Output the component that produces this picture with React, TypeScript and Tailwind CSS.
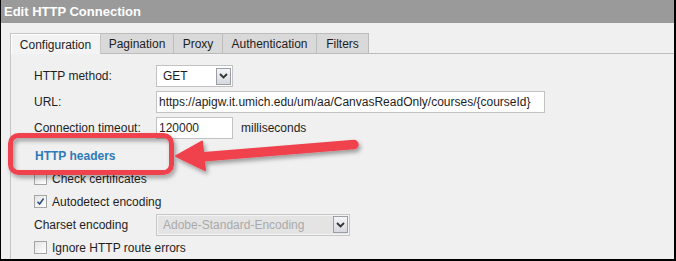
import React from "react";

const font = "font-['Liberation_Sans',Arial,sans-serif]";

function Chevron() {
  return (
    <svg width="9" height="6" viewBox="0 0 9 6">
      <path d="M1 1 L4.5 4.5 L8 1" fill="none" stroke="#333" strokeWidth="1.8" />
    </svg>
  );
}

function DropButton() {
  return (
    <span className="flex h-[17px] w-[15px] items-center justify-center border border-[#9a9ea6] bg-gradient-to-b from-[#f4f5f7] to-[#d6d9df]">
      <Chevron />
    </span>
  );
}

function Checkbox({ checked, label }: { checked?: boolean; label: string }) {
  return (
    <div className="flex h-[23px] items-center gap-[5px]">
      <span className="flex h-[13px] w-[13px] items-center justify-center border border-[#a5a5a5] bg-gradient-to-br from-[#e4e4e4] to-white">
        {checked && (
          <svg width="9" height="9" viewBox="0 0 9 9">
            <path d="M1.5 4.8 L3.6 7 L7.6 1.6" fill="none" stroke="#2b4f85" strokeWidth="1.6" />
          </svg>
        )}
      </span>
      <span>{label}</span>
    </div>
  );
}

const tabs = [
  { label: "Pagination", w: "w-[73px]" },
  { label: "Proxy", w: "w-[49px]" },
  { label: "Authentication", w: "w-[94px]" },
  { label: "Filters", w: "w-[52px]" },
];

export default function App() {
  return (
    <div className={`relative h-[261px] w-[676px] overflow-hidden border-b-2 border-l border-r-2 border-black bg-[#f0f0f0] text-[12px] text-[#1e1e1e] ${font}`}>
      <div className="flex h-[23px] items-center bg-[#9a9a9a] pl-[3px] text-[13px] font-bold text-white">Edit HTTP Connection</div>

      <div className="pl-[9px] pt-[10px]">
        {/* tab strip */}
        <div className="flex h-[21px] items-stretch">
          <div className="relative z-10 flex w-[91px] items-center justify-center border-l border-r border-t border-[#c5c5c5] bg-[#f3f3f3] pt-[1px] shadow-[inset_1px_1px_0_#fff]">
            Configuration
          </div>
          {tabs.map((t) => (
            <div key={t.label} className={`flex ${t.w} items-center justify-center border-b border-r border-t border-[#bcbcbc] bg-[#d9d9d9] pt-[1px]`}>
              {t.label}
            </div>
          ))}
          <div className="flex-1 border-b border-[#bcbcbc]" />
        </div>

        {/* panel */}
        <div className="h-[220px] border-l border-[#c5c5c5] pl-[23px] pt-[11px]">
          <div className="flex h-[22px] items-center">
            <span className="w-[122px]">HTTP method:</span>
            <div className="flex h-[22px] w-[77px] items-center justify-between border border-[#c2c2c2] bg-white pl-[6px] pr-[1px]">
              <span>GET</span>
              <DropButton />
            </div>
          </div>
          <div className="mt-[4px] flex h-[22px] items-center">
            <span className="w-[122px]">URL:</span>
            <div className="flex h-[22px] w-[389px] items-center border border-[#c2c2c2] bg-white pl-[2px]">
              https://apigw.it.umich.edu/um/aa/CanvasReadOnly/courses/{"{courseId}"}
            </div>
          </div>
          <div className="mt-[4px] flex h-[22px] items-center">
            <span className="w-[122px]">Connection timeout:</span>
            <div className="flex h-[22px] w-[77px] items-center border border-[#c2c2c2] bg-white pl-[2px]">120000</div>
            <span className="ml-[8px]">milliseconds</span>
          </div>
          <div className="mt-[6px] flex h-[22px] items-center pl-[1px] font-bold text-[#2e7ab8]">HTTP headers</div>
          <Checkbox label="Check certificates" />
          <Checkbox checked label="Autodetect encoding" />
          <div className="flex h-[23px] items-center">
            <span className="w-[122px]">Charset encoding</span>
            <div className="flex h-[22px] w-[194px] items-center justify-between border border-[#c6c6c6] bg-[#e4e4e4] pl-[6px] pr-[1px] text-[#a9a9a9] shadow-[inset_0_0_0_1px_#f4f4f4]">
              <span>Adobe-Standard-Encoding</span>
              <DropButton />
            </div>
          </div>
          <Checkbox label="Ignore HTTP route errors" />
        </div>
      </div>

      {/* annotation overlay */}
      <svg className="pointer-events-none absolute left-0 top-0" width="676" height="261" viewBox="0 0 676 261">
        <defs>
          <filter id="sh" x="-10%" y="-30%" width="130%" height="180%">
            <feDropShadow dx="2" dy="3" stdDeviation="2.2" floodColor="#000" floodOpacity="0.35" />
          </filter>
        </defs>
        <g filter="url(#sh)">
          <rect x="9.5" y="135.5" width="161" height="37" rx="8" fill="none" stroke="#f0424e" strokeWidth="5" />
          <line x1="200" y1="157" x2="353" y2="144.5" stroke="#f0424e" strokeWidth="9.5" strokeLinecap="round" />
          <polygon points="175,156 201,141.5 204,170" fill="#f0424e" stroke="#f0424e" strokeWidth="2" strokeLinejoin="round" />
        </g>
      </svg>
    </div>
  );
}
